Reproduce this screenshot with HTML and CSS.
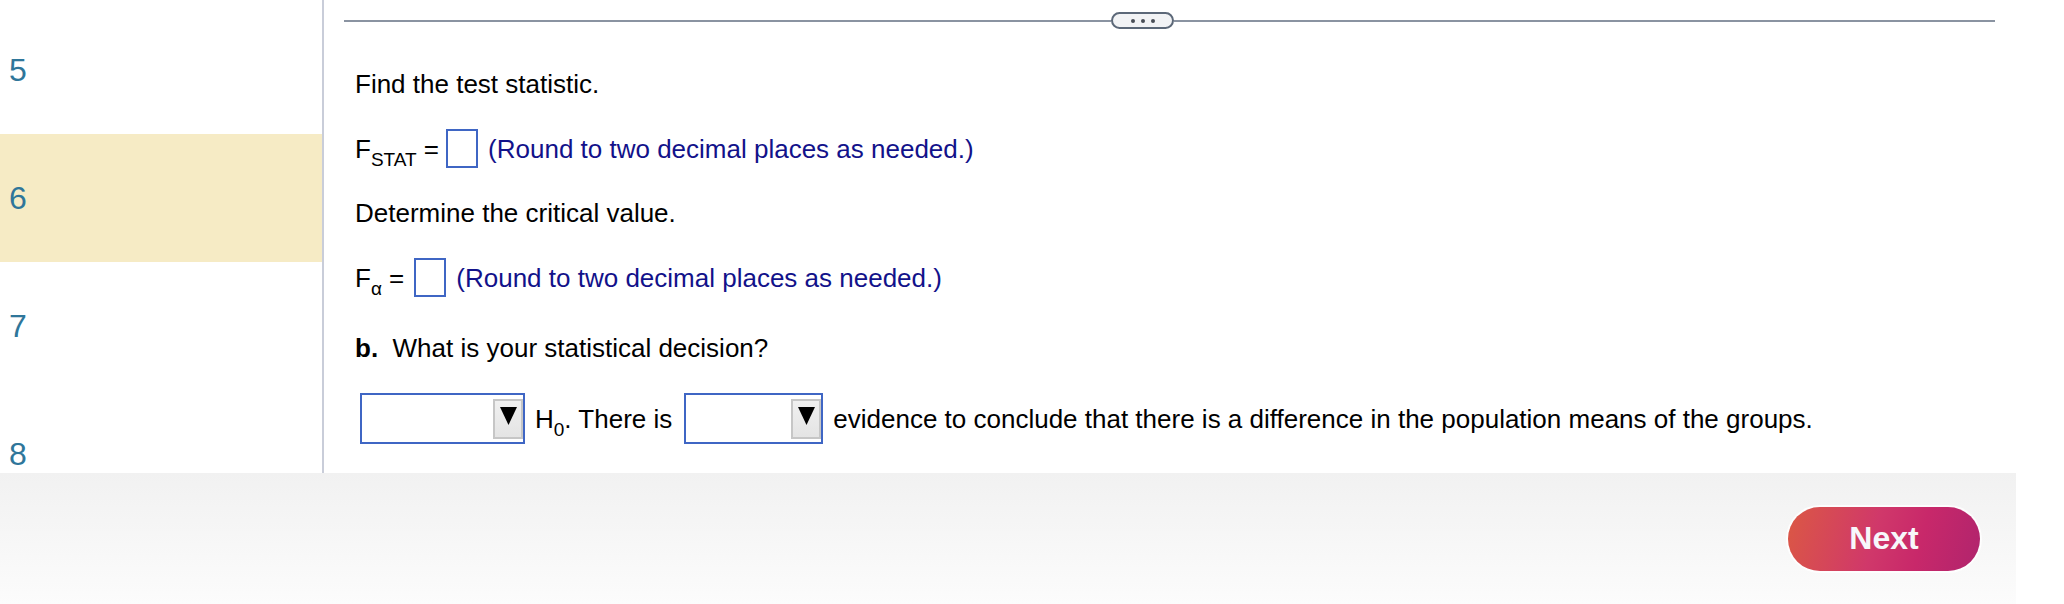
FILE: index.html
```html
<!DOCTYPE html>
<html lang="en">
<head>
    <meta charset="UTF-8">
    <meta name="viewport" content="width=device-width, initial-scale=1.0">
    <title>Question 6</title>
    <link rel="stylesheet" href="styles.css">
</head>

<body>
    <div class="screen">
        <div class="workspace">
            <aside class="nav">
                <ol class="nav-list">
                    <li class="nav-item">5</li>
                    <li class="nav-item current">6</li>
                    <li class="nav-item">7</li>
                    <li class="nav-item">8</li>
                </ol>
            </aside>

            <main class="question">
                <div class="divider">
                    <span class="divider-line lead"></span>
                    <button class="expand" type="button" aria-label="Show more">
                        <span class="dot"></span><span class="dot"></span><span class="dot"></span>
                    </button>
                    <span class="divider-line"></span>
                </div>

                <div class="prompt">
                    <p class="row">Find the test statistic.</p>

                    <div class="row">
                        <span class="label">F<sub class="sub">STAT</sub> =</span>
                        <span class="answer-box"></span>
                        <span class="hint">(Round to two decimal places as needed.)</span>
                    </div>

                    <p class="row">Determine the critical value.</p>

                    <div class="row">
                        <span class="label">F<sub class="sub">α</sub> =</span>
                        <span class="answer-box alpha"></span>
                        <span class="hint">(Round to two decimal places as needed.)</span>
                    </div>

                    <p class="row part"><b>b.</b>&nbsp; What is your statistical decision?</p>

                    <div class="row">
                        <span class="dropdown wide">
                            <span class="dropdown-arrow">
                                <svg width="17" height="18" viewBox="0 0 17 18"><polygon points="0,0 17,0 8.5,18" fill="#000"/></svg>
                            </span>
                        </span>
                        <span class="inline-text first">H<sub class="sub">0</sub>. There is</span>
                        <span class="dropdown">
                            <span class="dropdown-arrow">
                                <svg width="17" height="18" viewBox="0 0 17 18"><polygon points="0,0 17,0 8.5,18" fill="#000"/></svg>
                            </span>
                        </span>
                        <span class="inline-text last">evidence to conclude that there is a difference in the population means of the groups.</span>
                    </div>
                </div>
            </main>
        </div>

        <footer class="footer">
            <button class="next-btn" type="button">Next</button>
        </footer>
    </div>
</body>

</html>
```

FILE: styles.css
```css
* {
    margin: 0;
    padding: 0;
    box-sizing: border-box;
}

html,
body {
    width: 2064px;
    height: 604px;
    overflow: hidden;
    background-color: #fff;
}

body {
    font-family: 'Liberation Sans', Arial, sans-serif;
    color: #000;
}

.screen {
    width: 2016px;
    height: 604px;
    display: flex;
    flex-direction: column;
}

.workspace {
    display: flex;
    height: 473px;
}

/* Question list */
.nav {
    width: 324px;
    flex-shrink: 0;
    border-right: 2px solid #c9cdd9;
    padding-top: 6px;
    overflow: hidden;
}

.nav-list {
    list-style: none;
}

.nav-item {
    height: 128px;
    display: flex;
    align-items: center;
    padding-left: 9px;
    font-size: 32px;
    color: #2f769a;
}

.nav-item.current {
    background-color: #f6ebc5;
}

/* Question body */
.question {
    flex: 1;
    padding: 12px 21px 0 20px;
}

.divider {
    display: flex;
    align-items: center;
    height: 17px;
}

.divider-line {
    flex: 1;
    height: 2px;
    background-color: #8a93a1;
}

.divider-line.lead {
    flex: 0 0 767px;
}

.expand {
    width: 63px;
    height: 17px;
    border: 2px solid #5c6878;
    border-radius: 9px;
    background-color: #f2f3f5;
    display: flex;
    justify-content: center;
    align-items: center;
    gap: 6px;
}

.expand .dot {
    width: 4px;
    height: 4px;
    border-radius: 50%;
    background-color: #4a4f57;
}

.prompt {
    margin-top: 40px;
    padding-left: 11px;
    display: flex;
    flex-direction: column;
    gap: 30px;
    font-size: 26px;
    line-height: 30px;
}

.row {
    display: flex;
    align-items: center;
    white-space: nowrap;
}

.row.part {
    margin-top: 6px;
}

.sub {
    font-size: 19px;
    line-height: 0;
    vertical-align: -8px;
}

.answer-box {
    width: 32px;
    height: 39px;
    margin: 0 10px 0 7px;
    border: 2px solid #3f66c4;
    background-color: #fff;
}

.answer-box.alpha {
    margin-left: 10px;
}

.hint {
    color: #12128a;
}

/* Dropdowns */
.dropdown {
    width: 139px;
    height: 51px;
    border: 2px solid #3f66c4;
    background-color: #fff;
    display: flex;
    justify-content: flex-end;
    align-items: center;
}

.dropdown.wide {
    width: 165px;
    margin-left: 5px;
}

.dropdown-arrow {
    width: 30px;
    height: 40px;
    border: 2px solid #c6c6c6;
    background: linear-gradient(#f0f0f0, #e4e4e4);
    display: flex;
    justify-content: center;
    align-items: center;
}

.dropdown-arrow svg {
    margin-bottom: 5px;
}

.inline-text.first {
    margin: 0 12px 0 10px;
}

.inline-text.last {
    margin-left: 10px;
}

/* Footer */
.footer {
    height: 131px;
    background: linear-gradient(#f1f1f1, #fcfcfc);
    display: flex;
    justify-content: flex-end;
    align-items: center;
    padding-right: 36px;
}

.next-btn {
    width: 192px;
    height: 64px;
    border: none;
    border-radius: 32px;
    background: linear-gradient(105deg, #db5844 0%, #d0386a 45%, #c8286a 68%, #b0246d 100%);
    box-shadow: 0 0 0 2px rgba(255, 255, 255, 0.8);
    color: #f7f7fb;
    font-family: 'Liberation Sans', Arial, sans-serif;
    font-size: 32px;
    font-weight: bold;
}
```
